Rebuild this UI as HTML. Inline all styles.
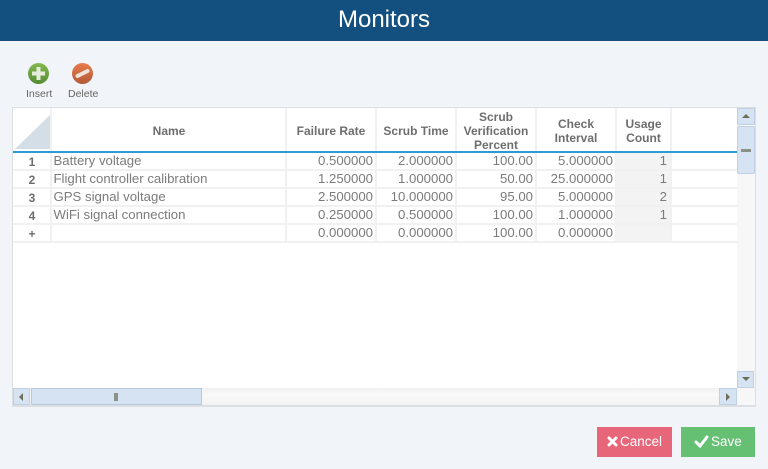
<!DOCTYPE html>
<html><head><meta charset="utf-8"><style>
html,body{margin:0;padding:0}
body{width:768px;height:469px;overflow:hidden;background:#f1f4f8;position:relative;font-family:"Liberation Sans",sans-serif}
div,span{position:absolute;box-sizing:border-box}
#w{left:0;top:0;width:768px;height:469px;filter:blur(.35px)}
.t{white-space:nowrap;line-height:18px;font-size:13.2px;color:#7b7b7b}
.r{text-align:right}
.h{font-size:12px;font-weight:bold;color:#6e6e6e;line-height:14px;text-align:center}
.n{font-size:12px;font-weight:bold;color:#6e6e6e;line-height:18px;text-align:center;left:13px;width:38px}
.hl{height:2px;left:13px;width:724px;background:#f1f1f1}
.vl{width:2px;top:108px;height:134px;background:#f1f1f1}
.sb{background:#d6e3f2;border:1px solid #bfd0e4}
</style></head><body><div id="w">
<div style="left:0;top:0;width:768px;height:41px;background:#14507f;color:#fff;font-size:24px;line-height:40px;text-align:center">Monitors</div>

<svg style="position:absolute;left:28px;top:63px" width="22" height="22" viewBox="0 0 22 22"><defs><linearGradient id="g" x1="0" y1="0" x2="0" y2="1"><stop offset="0" stop-color="#84b94f"/><stop offset="1" stop-color="#558b34"/></linearGradient><linearGradient id="o" x1="0" y1="0" x2="0" y2="1"><stop offset="0" stop-color="#e87b4b"/><stop offset="1" stop-color="#b25a38"/></linearGradient></defs><circle cx="10.5" cy="10.5" r="10.5" fill="url(#g)"/><path d="M8.5 4h4v4.5h4.5v4h-4.500v4.500h-4v-4.500h-4.500v-4h4.500z" fill="#e4eedb"/></svg>
<svg style="position:absolute;left:72px;top:63px" width="22" height="22" viewBox="0 0 22 22"><circle cx="10.500" cy="10.500" r="10.500" fill="url(#o)"/><path d="M5.500 13L15.500 8" stroke="#f3e2d8" stroke-width="4" stroke-linecap="round"/></svg>
<div class="t" style="left:26px;top:85px;font-size:10.500px;color:#666;">Insert</div>
<div class="t" style="left:68px;top:85px;font-size:10.500px;color:#666;">Delete</div>

<div style="left:12px;top:107px;width:744px;height:300px;background:#fff;border:1px solid #dcdfe2;border-bottom:2px solid #dcdfe2"></div>

<svg style="position:absolute;left:15px;top:115px" width="35" height="34"><path d="M35 0V34H0z" fill="#d3dee7"/></svg>

<div class="vl" style="left:50px"></div>
<div class="vl" style="left:285px"></div>
<div class="vl" style="left:375px"></div>
<div class="vl" style="left:455px"></div>
<div class="vl" style="left:535px"></div>
<div class="vl" style="left:615px"></div>
<div class="vl" style="left:670px"></div>
<div style="left:616px;top:153px;width:54px;height:88px;background:#f3f3f3"></div>

<div class="hl" style="top:169px"></div>
<div class="hl" style="top:187px"></div>
<div class="hl" style="top:205px"></div>
<div class="hl" style="top:223px"></div>
<div class="hl" style="top:241px"></div>
<div style="left:13px;top:151px;width:724px;height:2px;background:#2a9bd6"></div>

<div class="h" style="left:52px;width:234px;top:124px">Name</div>
<div class="h" style="left:287px;width:88px;top:124px">Failure Rate</div>
<div class="h" style="left:377px;width:78px;top:124px">Scrub Time</div>
<div class="h" style="left:457px;width:78px;top:110px">Scrub<br>Verification<br>Percent</div>
<div class="h" style="left:537px;width:78px;top:117px">Check<br>Interval</div>
<div class="h" style="left:617px;width:53px;top:117px">Usage<br>Count</div>

<div class="n" style="top:153px">1</div>
<div class="n" style="top:171px">2</div>
<div class="n" style="top:189px">3</div>
<div class="n" style="top:207px">4</div>
<div class="n" style="top:225px">+</div>

<div class="t" style="left:53.500px;top:152px">Battery voltage</div>
<div class="t" style="left:53.500px;top:170px">Flight controller calibration</div>
<div class="t" style="left:53.500px;top:188px">GPS signal voltage</div>
<div class="t" style="left:53.500px;top:206px">WiFi signal connection</div>

<div class="t r" style="left:287px;width:86px;top:152px">0.500000</div>
<div class="t r" style="left:287px;width:86px;top:170px">1.250000</div>
<div class="t r" style="left:287px;width:86px;top:188px">2.500000</div>
<div class="t r" style="left:287px;width:86px;top:206px">0.250000</div>
<div class="t r" style="left:287px;width:86px;top:224px">0.000000</div>

<div class="t r" style="left:377px;width:76px;top:152px">2.000000</div>
<div class="t r" style="left:377px;width:76px;top:170px">1.000000</div>
<div class="t r" style="left:377px;width:76px;top:188px">10.000000</div>
<div class="t r" style="left:377px;width:76px;top:206px">0.500000</div>
<div class="t r" style="left:377px;width:76px;top:224px">0.000000</div>

<div class="t r" style="left:457px;width:76px;top:152px">100.00</div>
<div class="t r" style="left:457px;width:76px;top:170px">50.00</div>
<div class="t r" style="left:457px;width:76px;top:188px">95.00</div>
<div class="t r" style="left:457px;width:76px;top:206px">100.00</div>
<div class="t r" style="left:457px;width:76px;top:224px">100.00</div>

<div class="t r" style="left:537px;width:76px;top:152px">5.000000</div>
<div class="t r" style="left:537px;width:76px;top:170px">25.000000</div>
<div class="t r" style="left:537px;width:76px;top:188px">5.000000</div>
<div class="t r" style="left:537px;width:76px;top:206px">1.000000</div>
<div class="t r" style="left:537px;width:76px;top:224px">0.000000</div>

<div class="t r" style="left:617px;width:50px;top:152px">1</div>
<div class="t r" style="left:617px;width:50px;top:170px">1</div>
<div class="t r" style="left:617px;width:50px;top:188px">2</div>
<div class="t r" style="left:617px;width:50px;top:206px">1</div>

<!-- vertical scrollbar -->
<div style="left:737px;top:108px;width:18px;height:297px;background:#f7f7f7"></div>
<div class="sb" style="left:737px;top:108px;width:18px;height:17px"></div>
<svg style="position:absolute;left:741px;top:113px" width="10" height="6"><path d="M1 5L5 1l4 4z" fill="#6f6f58"/></svg>
<div class="sb" style="left:737px;top:126px;width:18px;height:48px;border-radius:2px"></div>
<div style="left:741px;top:149px;width:10px;height:3px;background:#8c9188"></div>
<div class="sb" style="left:737px;top:371px;width:17px;height:17px"></div>
<svg style="position:absolute;left:741px;top:376px" width="10" height="6"><path d="M1 1l4 4 4-4z" fill="#6f6f58"/></svg>

<!-- horizontal scrollbar -->
<div style="left:13px;top:388px;width:724px;height:17px;background:linear-gradient(#f0f0f0,#f9f9f9 40%,#f3f3f3)"></div>
<div class="sb" style="left:13px;top:388px;width:17px;height:17px"></div>
<svg style="position:absolute;left:18px;top:392px" width="6" height="10"><path d="M5 1L1 5l4 4z" fill="#6f6f58"/></svg>
<div class="sb" style="left:31px;top:388px;width:171px;height:17px;border-color:#b4c8de"></div>
<div style="left:114px;top:393px;width:4px;height:8px;background:#8c9188"></div>
<div class="sb" style="left:719px;top:388px;width:18px;height:17px"></div>
<svg style="position:absolute;left:725px;top:392px" width="6" height="10"><path d="M1 1l4 4-4 4z" fill="#6f6f58"/></svg>

<!-- buttons -->
<div style="left:597px;top:427px;width:75px;height:30px;background:#e8667a"></div>
<svg style="position:absolute;left:607px;top:436px" width="11" height="11"><path d="M2 2l7 7M9 2l-7 7" stroke="#fff" stroke-width="3" stroke-linecap="round"/></svg>
<div class="t" style="left:620px;top:433px;font-size:13.500px;color:#fff">Cancel</div>
<div style="left:681px;top:427px;width:74px;height:30px;background:#66c074"></div>
<svg style="position:absolute;left:694px;top:435px" width="15" height="13"><path d="M2 7l4 4 7-9" stroke="#fff" stroke-width="3" fill="none" stroke-linecap="round"/></svg>
<div class="t" style="left:711px;top:433px;font-size:13.500px;color:#fff">Save</div>
</div></body></html>
